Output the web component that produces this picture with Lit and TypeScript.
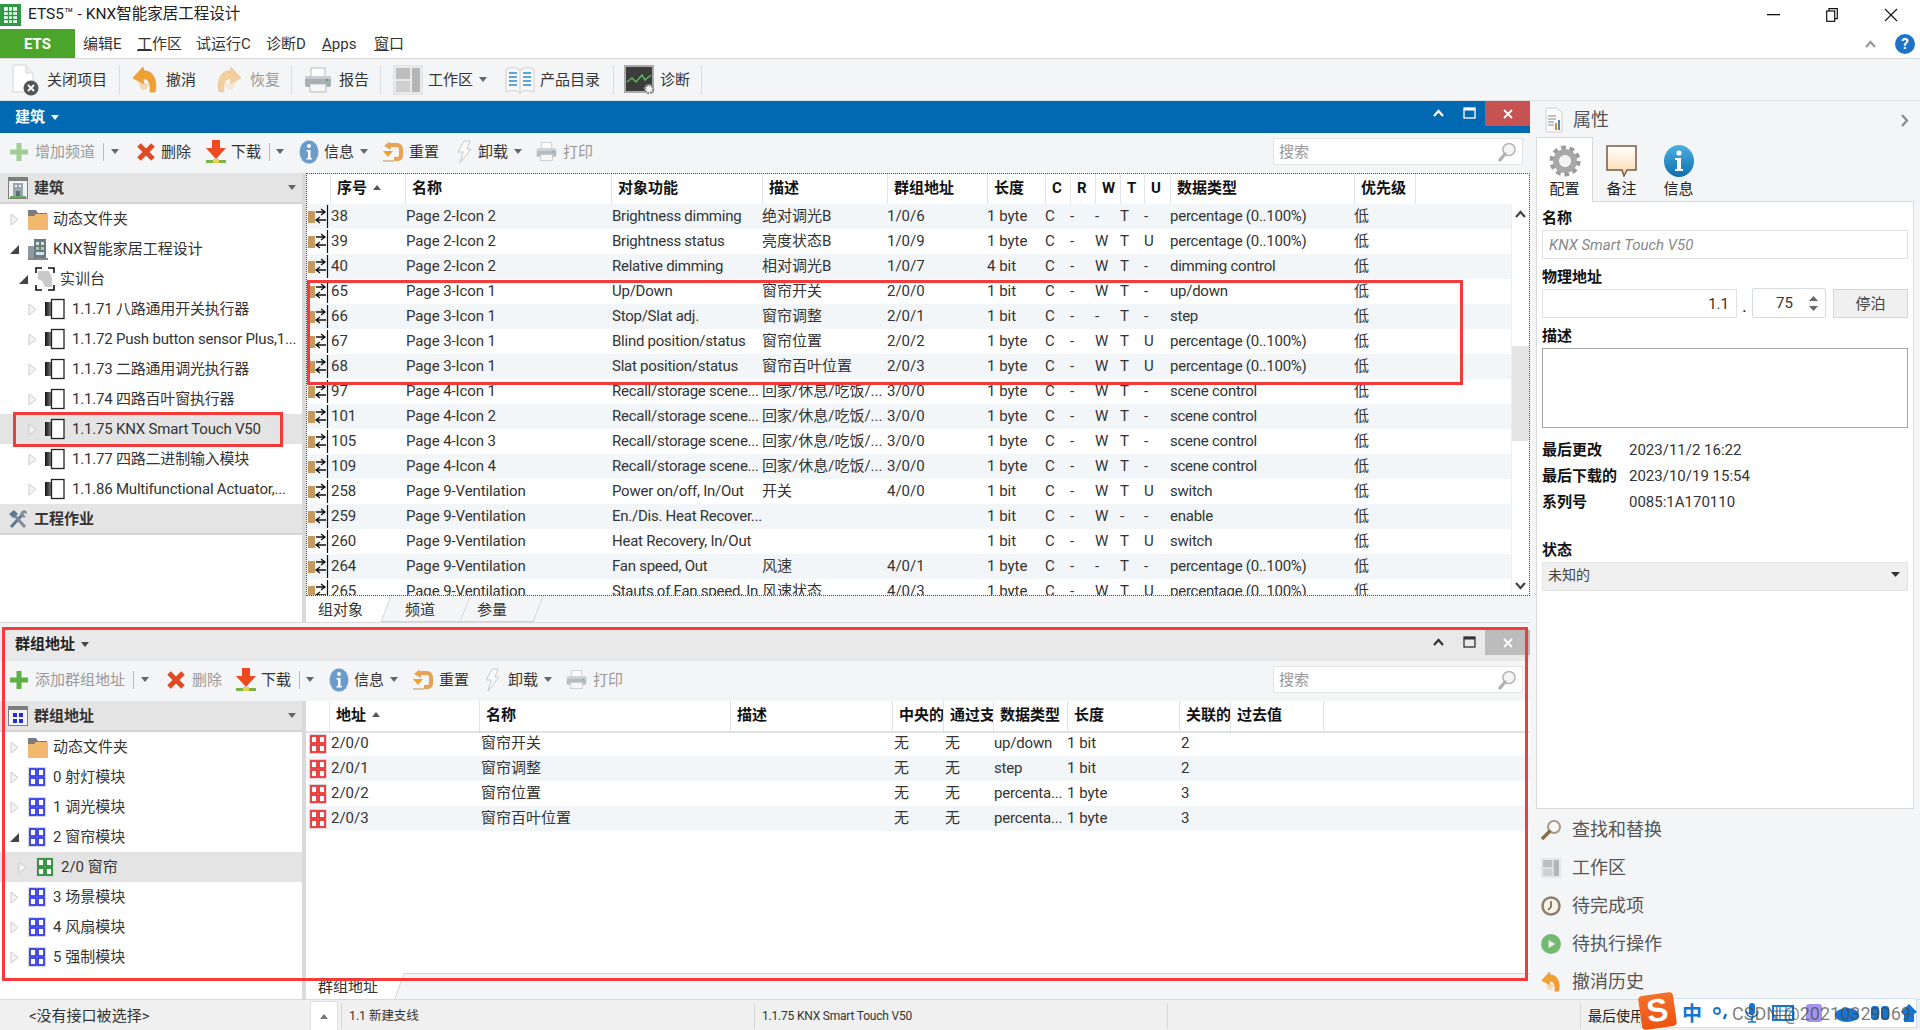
import { LitElement, html, css, svg } from "lit";
import { customElement } from "lit/decorators.js";

const S = (w: number, h: number, body: any, vb?: string) => html`<svg width=${w} height=${h} viewBox=${vb || `0 0 ${w} ${h}`} xmlns="http://www.w3.org/2000/svg">${body}</svg>`;

const logo = () => S(21, 22, svg`<rect width="21" height="22" fill="#2f9a45"/><rect x="4" y="3" width="13" height="16" fill="#fff"/><path d="M8.500 3v16M12.500 3v16M4 7.500h13M4 11.500h13M4 15.500h13" stroke="#2f9a45" stroke-width="1.400"/>`);
const closeDoc = () => S(30, 32, svg`<path d="M3 1h13l7 8v19H3z" fill="#fff" stroke="#d5d5d5"/><path d="M16 1v8h7" fill="#eee" stroke="#d5d5d5"/><circle cx="21" cy="24" r="7.500" fill="#555"/><path d="M18 21l6 6M24 21l-6 6" stroke="#fff" stroke-width="1.800"/>`);
const undoP = svg`<path d="M23 25C26 14 21 3 12 4L11 0 1 11l11 6-1-5c5-1 8 4 7 13z" fill="#f0a030" stroke="#e08a20" stroke-width=".6"/><path d="M6 14l3 9 5 0 3-6-5-1z" fill="#f5c070" opacity=".55"/>`;
const undo = (o = 1, flip = false) => html`<svg width="26" height="26" viewBox="0 0 26 26" style=${`opacity:${o};${flip ? "transform:scaleX(-1)" : ""}`}>${undoP}</svg>`;
const printer = (w = 28, o = 1) => html`<svg width=${w} height=${w} viewBox="0 0 28 28" style=${`opacity:${o}`}><rect x="7" y="2" width="14" height="9" fill="#fff" stroke="#bbb"/><rect x="1" y="10" width="26" height="11" rx="2" fill="#a9aeb3"/><rect x="1" y="10" width="26" height="3" fill="#c8ccd0"/><circle cx="23" cy="14" r="1.200" fill="#4caf50"/><rect x="6" y="18" width="16" height="8" fill="#f6f6f6" stroke="#bbb"/></svg>`;
const wsIcon = (s = 30) => html`<svg width=${s} height=${s} viewBox="0 0 30 30"><rect width="30" height="30" fill="#e9e9e9" stroke="#dcdcdc"/><rect x="3" y="3" width="14" height="11" fill="#bdbdbd"/><rect x="3" y="16" width="14" height="11" fill="#cfcfcf"/><rect x="19" y="3" width="8" height="24" fill="#b5b5b5"/></svg>`;
const book = () => S(30, 30, svg`<path d="M1 4c5-2 10-2 14 1 4-3 9-3 14-1v23c-5-2-10-2-14 1-4-3-9-3-14-1z" fill="#f7f7f7" stroke="#cfcfcf"/><path d="M15 5v23" stroke="#ccc"/><path d="M4 8h8M4 12h8M4 16h8M4 20h8" stroke="#58a8dc" stroke-width="2"/><path d="M18 8h8M18 12h8M18 16h8M18 20h8" stroke="#58a8dc" stroke-width="2"/>`);
const diag = () => S(32, 30, svg`<rect x="1" y="1" width="28" height="26" fill="#3c3c3c" stroke="#aaa" stroke-width="2"/><path d="M3 17l5-4 4 4 6-7 3 5 6-5" fill="none" stroke="#5cb85c" stroke-width="1.500"/><circle cx="25" cy="24" r="4" fill="#fff" stroke="#8a8a8a" stroke-width="2.600" stroke-dasharray="2 1"/>`);
const plus = (o = 1) => html`<svg width="18" height="18" viewBox="0 0 18 18" style=${`opacity:${o}`}><path d="M6.500 0h5v6.500h6.500v5h-6.500v6.500h-5v-6.500h-6.500v-5h6.500z" fill="#5eb044"/></svg>`;
const xIcon = () => S(20, 20, svg`<path d="M3 3l14 14M17 3L3 17" stroke="#e04b25" stroke-width="5"/>`);
const dl = () => S(22, 24, svg`<path d="M7 0h8v8h6L11 19 1 8h6z" fill="#ee4a22"/><rect x="1" y="20" width="20" height="3" fill="#7bb54a"/><rect x="8" y="19" width="6" height="4" fill="#e8d24a"/>`);
const info = () => S(20, 24, svg`<ellipse cx="10" cy="12" rx="9.500" ry="11.500" fill="#6b9ccb"/><circle cx="10" cy="6" r="2" fill="#fff"/><path d="M7.500 10h4v8h1.500v1.500H7.500V18H9v-6.500H7.500z" fill="#fff"/>`);
const reset = () => S(22, 24, svg`<path d="M7 3h8a6 6 0 0 1 6 6v7a5 5 0 0 1-5 5h-4v-4h3a2 2 0 0 0 2-2V9a2 2 0 0 0-2-2H9v3L2 6l6-5z" fill="#e8a258"/><path d="M1 11h10l-5 6z" fill="#f0a030"/><rect x="1" y="20" width="11" height="2" fill="#d9c3a5"/>`);
const bolt = () => S(16, 24, svg`<path d="M8 1h6l-3 8h4L4 23l3-11H2z" fill="#fafafa" stroke="#c8c8c8"/>`);
const search = () => S(20, 20, svg`<circle cx="12" cy="7.500" r="6" fill="#f5f5f5" stroke="#b5b5b5" stroke-width="1.600"/><path d="M8 12l-5 6" stroke="#b0b0b0" stroke-width="3.200" stroke-linecap="round"/>`);
const groupObj = () => S(22, 25, svg`<rect x="1" y="7" width="7" height="12" fill="#c49a5e"/><path d="M9 8h8M14 5l4 3-4 3" fill="none" stroke="#111" stroke-width="1.300"/><path d="M19 16h-9M13 13l-4 3 4 3" fill="none" stroke="#111" stroke-width="1.300"/><path d="M20.500 1v23" stroke="#111" stroke-width="1.200"/>`);
const triOpen = () => S(9, 13, svg`<path d="M1 1l7 5.500L1 12z" fill="#f4f4f4" stroke="#ccc"/>`);
const triDown = () => S(9, 9, svg`<path d="M9 0v9H0z" fill="#444"/>`);
const folder = () => S(20, 23, svg`<path d="M0 2h8l2 3h9v5H0z" fill="#7b7b7b"/><path d="M0 22V8h6l2-2h12v16z" fill="#f2b96e"/>`);
const project = () => S(20, 22, svg`<rect x="0" y="8" width="8" height="13" fill="#8f9aa0"/><rect x="6" y="1" width="12" height="20" fill="#6e7a80"/><rect x="8" y="4" width="3" height="3" fill="#cfe3ea"/><rect x="13" y="4" width="3" height="3" fill="#cfe3ea"/><rect x="8" y="9" width="3" height="3" fill="#9fd09a"/><rect x="13" y="9" width="3" height="3" fill="#9fd09a"/><rect x="8" y="14" width="8" height="3" fill="#cfe3ea"/><rect x="0" y="20" width="20" height="2" fill="#888"/>`);
const room = () => S(20, 24, svg`<path d="M0 0h20v24H0z" fill="#fff"/><path d="M1 6V1h6M13 1h6v5M1 18v5h6M13 23h6v-5" fill="none" stroke="#111" stroke-width="1.600"/><path d="M3 4h11l3 7v9h-7l-3-6-4-2z" fill="#c9c9c9"/>`);
const device = () => S(20, 22, svg`<defs><linearGradient id="dg" x1="0" x2="1"><stop offset="0" stop-color="#111"/><stop offset="1" stop-color="#888"/></linearGradient></defs><rect x="0" y="4" width="7" height="14" fill="url(#dg)"/><rect x="6.500" y="1.500" width="12.500" height="19" fill="#fff" stroke="#222" stroke-width="1.300"/>`);
const gaIcon = (c: string) => S(18, 20, svg`<rect width="18" height="20" fill="#d6d6dc"/><g fill="#fff" stroke=${c} stroke-width="1.700"><rect x="2" y="2" width="6" height="7"/><rect x="10" y="2" width="6" height="7"/><rect x="2" y="11" width="6" height="7"/><rect x="10" y="11" width="6" height="7"/></g>`);
const buildingH = () => S(20, 22, svg`<rect x=".5" y=".5" width="19" height="21" fill="#f2f2f2" stroke="#7d7d7d"/><rect x="1" y="1" width="18" height="3" fill="#7d7d7d"/><rect x="5" y="6" width="10" height="13" fill="#9aa6ad"/><rect x="7" y="8" width="2" height="2" fill="#e8f0f5"/><rect x="11" y="8" width="2" height="2" fill="#e8f0f5"/><rect x="8" y="14" width="4" height="5" fill="#5f6d75"/><rect x="2" y="19" width="16" height="2" fill="#5fae5a"/>`);
const tools = () => S(20, 20, svg`<path d="M3 18L15 5" stroke="#5d7a94" stroke-width="3"/><path d="M17 18L6 6" stroke="#7f8c95" stroke-width="3"/><path d="M1 5l5-4 4 4-5 4z" fill="#5d7a94"/><path d="M14 2c3-2 5 0 5 3l-3-1-1 2 3 1c-2 3-6 1-6-2z" fill="#7f8c95"/>`);
const gaH = () => S(20, 20, svg`<rect x=".5" y=".5" width="19" height="19" fill="#f4f4f8" stroke="#7d7d7d"/><rect x="1" y="1" width="18" height="3" fill="#7d7d7d"/><g fill="#1c2fd6"><rect x="5" y="7" width="4" height="4"/><rect x="11" y="7" width="4" height="4"/><rect x="5" y="13" width="4" height="4"/><rect x="11" y="13" width="4" height="4"/></g>`);
const propDoc = () => S(18, 26, svg`<path d="M1 1h11l5 5v19H1z" fill="#fafafa" stroke="#d0d0d0"/><path d="M3 9h8M3 12h8M3 15h6M3 18h6" stroke="#888" stroke-width="1.200"/><rect x="10" y="16" width="2" height="7" fill="#e08a20"/><rect x="13" y="13" width="2" height="10" fill="#3f86c8"/>`);
const gear = () => S(32, 32, svg`<circle cx="16" cy="16" r="13" fill="none" stroke="#9a9a9a" stroke-width="5" stroke-dasharray="4.500 3.670"/><circle cx="16" cy="16" r="9" fill="none" stroke="#a8a8a8" stroke-width="6"/><circle cx="16" cy="16" r="5" fill="#f2f2f2"/>`);
const note = () => S(32, 32, svg`<defs><linearGradient id="ng" x1="0" x2="0" y1="0" y2="1"><stop offset="0" stop-color="#fff"/><stop offset="1" stop-color="#fcd9aa"/></linearGradient></defs><path d="M1 1h29v24h-9l-3 6-2-6H1z" fill="url(#ng)" stroke="#7a5a44" stroke-width="1.500"/>`);
const bigInfo = () => S(30, 32, svg`<defs><linearGradient id="ig" x1="0" x2="0" y1="0" y2="1"><stop offset="0" stop-color="#4db0e0"/><stop offset="1" stop-color="#0d6fb0"/></linearGradient></defs><ellipse cx="15" cy="16" rx="15" ry="16" fill="url(#ig)"/><circle cx="15" cy="8" r="2.600" fill="#fff"/><path d="M11 13h6v11h2v2h-8v-2h2v-9h-2z" fill="#fff"/>`);
const mag = () => S(20, 20, svg`<circle cx="13" cy="7" r="6" fill="#f8f8f8" stroke="#a89a8a" stroke-width="2"/><path d="M8.500 11.500L2 18" stroke="#8a6a4a" stroke-width="3.500" stroke-linecap="round"/>`);
const clock = () => S(20, 20, svg`<circle cx="10" cy="10" r="8.500" fill="#faf3e6" stroke="#8d7f70" stroke-width="2.500"/><path d="M10 5v6l-3 3" fill="none" stroke="#6a5a4a" stroke-width="1.500"/>`);
const play = () => S(20, 20, svg`<circle cx="10" cy="10" r="10" fill="#73b973"/><path d="M7.500 6l7 4-7 4z" fill="#e4f3e4"/>`);
const triCaret = (c = "#666") => S(8, 5, svg`<path d="M0 0h8L4 5z" fill=${c}/>`);
const chev = (c = "#fff") => S(11, 8, svg`<path d="M1 7l4.500-5L10 7" fill="none" stroke=${c} stroke-width="2.200"/>`);
const maxBtn = (c = "#fff") => S(13, 12, svg`<rect x="1" y="1" width="11" height="10" fill="none" stroke=${c} stroke-width="1.300"/><rect x="1" y="1" width="11" height="2.500" fill=${c}/>`);
const xBtn = (c = "#fff") => S(10, 10, svg`<path d="M1 1l8 8M9 1l-8 8" stroke=${c} stroke-width="1.800"/>`);

const topRows: string[][] = [
  ["38","Page 2-Icon 2","Brightness dimming","绝对调光B","1/0/6","1 byte","C","-","-","T","-","percentage (0..100%)"],
  ["39","Page 2-Icon 2","Brightness status","亮度状态B","1/0/9","1 byte","C","-","W","T","U","percentage (0..100%)"],
  ["40","Page 2-Icon 2","Relative dimming","相对调光B","1/0/7","4 bit","C","-","W","T","-","dimming control"],
  ["65","Page 3-Icon 1","Up/Down","窗帘开关","2/0/0","1 bit","C","-","W","T","-","up/down"],
  ["66","Page 3-Icon 1","Stop/Slat adj.","窗帘调整","2/0/1","1 bit","C","-","-","T","-","step"],
  ["67","Page 3-Icon 1","Blind position/status","窗帘位置","2/0/2","1 byte","C","-","W","T","U","percentage (0..100%)"],
  ["68","Page 3-Icon 1","Slat position/status","窗帘百叶位置","2/0/3","1 byte","C","-","W","T","U","percentage (0..100%)"],
  ["97","Page 4-Icon 1","Recall/storage scene...","回家/休息/吃饭/...","3/0/0","1 byte","C","-","W","T","-","scene control"],
  ["101","Page 4-Icon 2","Recall/storage scene...","回家/休息/吃饭/...","3/0/0","1 byte","C","-","W","T","-","scene control"],
  ["105","Page 4-Icon 3","Recall/storage scene...","回家/休息/吃饭/...","3/0/0","1 byte","C","-","W","T","-","scene control"],
  ["109","Page 4-Icon 4","Recall/storage scene...","回家/休息/吃饭/...","3/0/0","1 byte","C","-","W","T","-","scene control"],
  ["258","Page 9-Ventilation","Power on/off, In/Out","开关","4/0/0","1 bit","C","-","W","T","U","switch"],
  ["259","Page 9-Ventilation","En./Dis. Heat Recover...","","","1 bit","C","-","W","-","-","enable"],
  ["260","Page 9-Ventilation","Heat Recovery, In/Out","","","1 bit","C","-","W","T","U","switch"],
  ["264","Page 9-Ventilation","Fan speed, Out","风速","4/0/1","1 byte","C","-","-","T","-","percentage (0..100%)"],
  ["265","Page 9-Ventilation","Stauts of Fan speed, In","风速状态","4/0/3","1 byte","C","-","W","T","U","percentage (0..100%)"],
];
const topHead = ["序号","名称","对象功能","描述","群组地址","长度","C","R","W","T","U","数据类型","优先级",""];
const gaRows = [
  ["2/0/0","窗帘开关","","无","无","up/down","1 bit","2"],
  ["2/0/1","窗帘调整","","无","无","step","1 bit","2"],
  ["2/0/2","窗帘位置","","无","无","percenta...","1 byte","3"],
  ["2/0/3","窗帘百叶位置","","无","无","percenta...","1 byte","3"],
];
const gaHead = ["地址","名称","描述","中央的","通过支","数据类型","长度","关联的","过去值",""];

type It = { i?: any; t?: string; o?: number; w: number; sep?: boolean; c?: boolean; caret?: boolean; dim?: boolean };
const main: It[] = [
  { i: closeDoc(), t: "关闭项目", o: 37, w: 109 }, { sep: true, w: 13 },
  { i: undo(), t: "撤消", o: 34, w: 84 }, { i: undo(.45, true), t: "恢复", o: 34, w: 75, dim: true }, { sep: true, w: 13 },
  { i: printer(), t: "报告", o: 35, w: 76 }, { sep: true, w: 13 },
  { i: wsIcon(), t: "工作区", o: 35, w: 112, caret: true }, { i: book(), t: "产品目录", o: 35, w: 108 }, { sep: true, w: 11 },
  { i: diag(), t: "诊断", o: 36, w: 77 }, { sep: true, w: 2 },
];
const sub1: It[] = [
  { i: plus(.55), t: "增加频道", o: 25, w: 93, dim: true }, { sep: true, w: 8 }, { c: true, w: 25 },
  { i: xIcon(), t: "删除", o: 25, w: 69 }, { i: dl(), t: "下载", o: 26, w: 64 }, { sep: true, w: 7 }, { c: true, w: 23 },
  { i: info(), t: "信息", o: 25, w: 83, caret: true }, { i: reset(), t: "重置", o: 27, w: 74 },
  { i: bolt(), t: "卸载", o: 22, w: 80, caret: true }, { i: printer(21, .8), t: "打印", o: 27, w: 70, dim: true },
];
const sub2: It[] = [
  { i: plus(), t: "添加群组地址", o: 25, w: 123, dim: true }, { sep: true, w: 8 }, { c: true, w: 25 },
  { i: xIcon(), t: "删除", o: 26, w: 69, dim: true }, { i: dl(), t: "下载", o: 26, w: 64 }, { sep: true, w: 7 }, { c: true, w: 23 },
  { i: info(), t: "信息", o: 25, w: 83, caret: true }, { i: reset(), t: "重置", o: 27, w: 72 },
  { i: bolt(), t: "卸载", o: 24, w: 82, caret: true }, { i: printer(21, .8), t: "打印", o: 27, w: 70, dim: true },
];
const menus: [any, number][] = [
  ["编辑E", 54], [html`<u>工</u>作区`, 59], ["试运行C", 70], ["诊断D", 56], [html`<u>A</u>pps`, 52], [html`<u>窗</u>口`, 40],
];

@customElement("app-root")
export class AppRoot extends LitElement {
  static styles = css`
    :host { display: block; position: relative; width: 1920px; height: 1030px; overflow: hidden; background: #f4f5f7;
      font-family: Roboto, "Noto Sans CJK SC", sans-serif; font-size: 15px; line-height: 20px; color: #222; }
    svg { display: block; flex: none; }
    .title { height: 29px; background: #fff; display: flex; align-items: center; }
    .title .tx { margin-left: 7px; font-size: 15.500px; color: #222; flex: 1; padding-bottom: 1px; }
    .winbtns { display: flex; align-items: center; }
    .wb { width: 58.500px; display: flex; justify-content: center; }
    .menu { height: 29px; background: #fff; display: flex; align-items: center; }
    .ets { width: 75px; height: 29px; background: #4ca52b; color: #fff; font-weight: 700; display: flex; align-items: center; justify-content: center; margin-right: 8px; font-size: 15px; }
    .mi { color: #333; flex: none; }
    .menu .sp { flex: 1; }
    .help { width: 20px; height: 20px; border-radius: 50%; background: #1b74c8; color: #fff; font-weight: 700; font-size: 15px; display: flex; align-items: center; justify-content: center; margin: 0 5px 0 19px; }
    .tb { height: 41px; border-top: 1px solid #d9d9d9; border-bottom: 1px solid #dcdfe3; background: #f4f5f7; display: flex; align-items: center; padding-left: 10px; box-sizing: content-box; }
    .sub { height: 40px; background: #f4f5f7; display: flex; align-items: center; padding-left: 10px; padding-bottom: 3px; box-sizing: border-box; flex: none; }
    .it { display: flex; align-items: center; flex: none; color: #333; white-space: nowrap; }
    .it.dim { color: #999; }
    .ib { flex: none; display: flex; align-items: center; }
    .it .cr { margin-left: 6px; }
    .sepl { width: 1px; height: 30px; background: #d9dce0; }
    .sub .sepl { height: 18px; background: #bbb; }
    .workarea { display: flex; height: 898px; }
    .left { width: 1530px; flex: none; display: flex; flex-direction: column; }
    .phead { height: 32px; background: #0069b1; color: #fff; display: flex; align-items: center; position: relative; flex: none; font-weight: 700; }
    .phead.gray { height: 31px; background: #e9e9e9; color: #222; }
    .phead.gray .ptitle { padding-bottom: 3px; }
    .ptitle { margin-left: 15px; display: flex; align-items: center; gap: 6px; flex: 1; }
    .pb { width: 31px; display: flex; justify-content: center; margin-top: -8px; }
    .pclose { width: 45px; height: 25px; background: #c75252; display: flex; align-items: center; justify-content: center; align-self: flex-start; }
    .phead.gray .pclose { background: #bcbcbc; }
    .sbox { margin-left: auto; margin-right: 7px; width: 250px; height: 27px; background: #fff; border: 1px solid #e3e3e3; display: flex; align-items: center; justify-content: space-between; color: #999; padding: 0 5px; box-sizing: border-box; flex: none; }
    .p1 { height: 522px; display: flex; flex-direction: column; border-bottom: 1px solid #d9d9d9; box-sizing: border-box; }
    .body { flex: 1; display: flex; min-height: 0; }
    .tree { width: 302px; flex: none; background: #fff; }
    .split { width: 4px; flex: none; background: #d9d9d9; }
    .thead { height: 31px; background: #e4e4e4; border-bottom: 2px solid #d4d4d4; box-sizing: border-box; display: flex; align-items: center; padding-left: 8px; color: #333; font-weight: 700; gap: 6px; }
    .thead .ca { margin-left: auto; margin-right: 6px; }
    .tr { height: 30px; display: flex; align-items: center; color: #333; white-space: nowrap; overflow: hidden; }
    .tr.sel { background: #e4e4e4; }
    .t { flex: none; display: flex; align-items: center; box-sizing: border-box; }
    .l0 .t { width: 28px; padding-left: 10px; }
    .l0 .n { width: 25px; }
    .l1 .t { width: 35px; padding-left: 19px; }
    .l1 .n { width: 25px; }
    .l2 { letter-spacing: -.2px; }
    .l2 .t { width: 45px; padding-left: 28px; }
    .l2 .n { width: 27px; }
    .g1 .t { width: 36px; padding-left: 18px; }
    .g1 .n { width: 25px; }
    .n { flex: none; }
    .right-pane { flex: 1; min-width: 0; display: flex; flex-direction: column; }
    .grid { flex: 1; min-height: 0; background: #fff; border: 1px dotted #444; overflow: hidden; display: flex; flex-direction: column; box-sizing: border-box; }
    .hrow { height: 30px; display: grid; background: #fff; border-bottom: 2px solid #e0e3e6; box-sizing: content-box; flex: none; font-weight: 700; color: #111; }
    .hc { border-left: 1px solid #e2e4e6; padding-left: 6px; line-height: 28px; white-space: nowrap; overflow: hidden; box-sizing: border-box; }
    .hc.first { border-left: 0; }
    .hc .sort { display: inline-block; vertical-align: 3px; margin-left: 6px; }
    .c1 { grid-template-columns: 23px 75px 206px 151px 125px 100px 58px 25px 25px 25px 24px 26px 184px 61px 96px 18px; }
    .c1b { grid-template-columns: 23px 75px 206px 151px 125px 100px 58px 25px 25px 25px 24px 26px 184px 61px 96px; }
    .c2 { grid-template-columns: 23px 150px 251px 162px 51px 50px 74px 112px 51px 93px 1fr; }
    .bodyrows { flex: 1; display: flex; min-height: 0; margin-top: -2px; }
    .rows { flex: 1; min-width: 0; }
    .row { height: 25px; display: grid; line-height: 25px; color: #333; white-space: nowrap; }
    .row.alt { background: #f2f6f9; }
    .row > div { overflow: hidden; white-space: nowrap; }
    .row .ic { display: flex; align-items: center; }
    .c1b > :nth-child(2), .c1b > :nth-child(3), .c1b > :nth-child(4) { padding-left: 1px; }
    .c1b > :nth-child(3) { letter-spacing: -.1px; }
    .c1b > :nth-child(4), .c1b > :nth-child(13) { letter-spacing: -.25px; }
    .c2.row .ic { padding-left: 3px; }
    .c2.row > :nth-child(2), .c2.row > :nth-child(3), .c2.row > :nth-child(5), .c2.row > :nth-child(6), .c2.row > :nth-child(9) { padding-left: 2px; }
    .c2.row > :nth-child(7) { padding-left: 1px; letter-spacing: -.2px; }
    .sb { width: 18px; flex: none; display: flex; flex-direction: column; align-items: center; background: #fff; border-left: 1px solid #eee; box-sizing: border-box; }
    .sb .th { width: 100%; background: #e4e4e4; height: 95px; margin-top: 128px; }
    .sb .ar { margin-top: 6px; }
    .sb .ar.dn { margin-top: auto; margin-bottom: 5px; transform: scaleY(-1); }
    .tabs { height: 26px; flex: none; display: flex; position: relative; background: #f4f5f7; }
    .tab { display: flex; align-items: center; color: #333; padding-left: 12px; padding-top: 1px; box-sizing: border-box; position: relative; z-index: 1; }
    .tabline { position: absolute; left: 0; top: 0; }
    .gap { height: 7px; flex: none; }
    .p2 { flex: 1; min-height: 0; display: flex; flex-direction: column; }
    .grid2 { flex: 1; min-height: 0; background: #fff; overflow: hidden; display: flex; flex-direction: column; }
    .rows2 { margin-top: -2px; }
    .right { flex: 1; min-width: 0; display: flex; flex-direction: column; padding-left: 6px; box-sizing: border-box; }
    .rh { height: 36px; flex: none; display: flex; align-items: center; padding-left: 9px; padding-top: 2px; box-sizing: border-box; font-size: 18px; color: #555; gap: 10px; }
    .rh .ch { margin-left: auto; margin-right: 11px; }
    .rtabs { display: flex; height: 65px; flex: none; margin-bottom: -1px; position: relative; z-index: 1; }
    .rt { width: 57px; height: 65px; box-sizing: border-box; display: flex; flex-direction: column; align-items: center; padding-top: 7px; gap: 2px; color: #222; border: 1px solid transparent; border-bottom: 0; }
    .rt.on { background: #fff; border-color: #d9d9d9; }
    .rbody { width: 378px; height: 608px; flex: none; box-sizing: border-box; background: #fff; border: 1px solid #d9d9d9; padding: 0 5px; display: flex; flex-direction: column; }
    .lab { height: 30px; padding-top: 6px; line-height: 24px; box-sizing: border-box; font-weight: 700; color: #111; flex: none; }
    .lab.first { margin-top: -2px; }
    .inp { height: 29px; border: 1px solid #e1e1e1; box-sizing: border-box; display: flex; align-items: center; flex: none; }
    .name { font-style: italic; color: #888; padding-left: 6px; }
    .ph { display: flex; height: 29px; flex: none; align-items: stretch; }
    .a1 { width: 195px; justify-content: flex-end; padding-right: 7px; color: #333; }
    .dot { width: 15px; text-align: center; line-height: 38px; font-weight: 700; font-size: 13px; }
    .a2 { width: 74px; height: 30px; margin-top: -1px; padding-left: 23px; justify-content: flex-start; border-color: #d5dbe0; border-radius: 2px; position: relative; color: #333; }
    .spin { margin-left: auto; margin-right: 7px; display: flex; flex-direction: column; gap: 5px; }
    .stop { width: 75px; margin-left: 7px; background: #f0f0f0; border: 1px solid #d5d5d5; box-sizing: border-box; display: flex; align-items: center; justify-content: center; color: #444; }
    .ta { height: 80px; flex: none; border: 1px solid #a6a6a6; box-sizing: border-box; }
    .kv { height: 26px; display: flex; align-items: center; flex: none; }
    .kv b { width: 87px; color: #111; font-weight: 700; white-space: nowrap; flex: none; }
    .kv span { color: #333; }
    .kvs { margin-top: 9px; }
    .sel2 { height: 29px; background: #f0f0f0; border: 1px solid #e4e4e4; box-sizing: border-box; display: flex; align-items: center; padding: 0 7px 4px 5px; justify-content: space-between; color: #444; flex: none; font-size: 14px; }
    .lab.st { margin-top: 17px; }
    .nav { margin-top: 2px; }
    .nv { height: 38px; display: flex; align-items: center; padding-left: 5px; gap: 11px; font-size: 18px; color: #555; }
    .nv svg { width: 20px; height: 20px; }
    .status { height: 32px; flex: none; background: #f0f0f0; border-top: 1px solid #d9d9d9; box-sizing: border-box; display: flex; align-items: center; position: relative; font-size: 12px; color: #333; }
    .nosel { width: 310px; padding-left: 29px; box-sizing: border-box; font-size: 15px; flex: none; }
    .upbox { width: 28px; height: 30px; background: #fff; border: 1px solid #e0e0e0; box-sizing: border-box; display: flex; align-items: center; justify-content: center; flex: none; margin-top: 1px; }
    .gap3 { width: 3px; flex: none; }
    .ssep { width: 1px; height: 26px; background: #d8d8d8; flex: none; }
    .st1 { width: 412px; padding-left: 7px; box-sizing: border-box; flex: none; font-size: 12.500px; letter-spacing: -.1px; }
    .st2 { width: 412px; padding-left: 7px; box-sizing: border-box; flex: none; letter-spacing: -.2px; }
    .st3 { width: 412px; flex: none; }
    .last { padding-left: 7px; font-size: 14px; color: #222; white-space: nowrap; }
    .ime { position: absolute; left: 1640px; top: 998px; width: 277px; height: 30px; background: #fff; border: 1px solid #cfe0f2; box-sizing: border-box; }
    .slogo { position: absolute; left: 1640px; top: 994px; width: 35px; height: 34px; background: linear-gradient(#f4702a, #ee5310); border-radius: 4px; transform: rotate(-8deg); color: #fff; font-weight: 900; font-size: 32px; line-height: 33px; text-align: center; font-family: "Liberation Sans", sans-serif; }
    .zh { position: absolute; left: 1682px; top: 1001px; color: #1476d2; font-size: 20px; font-weight: 700; line-height: 26px; }
    .wm { position: absolute; left: 1732px; top: 1003px; font-size: 18px; line-height: 22px; color: rgba(70,70,70,.7); white-space: nowrap; }
    .imeicons { position: absolute; left: 1712px; top: 1002px; display: flex; align-items: center; gap: 10px; }
    .red { position: absolute; border: 3px solid #f53a3a; box-sizing: border-box; pointer-events: none; z-index: 5; }
    .r1 { left: 13px; top: 412px; width: 270px; height: 35px; }
    .r2 { left: 307px; top: 280px; width: 1156px; height: 105px; }
    .r3 { left: 2px; top: 627px; width: 1526px; height: 354px; }
  `;

  items(list: It[]) {
    return list.map((x) => {
      if (x.sep) return html`<div class="it" style=${`width:${x.w}px`}><div class="sepl"></div></div>`;
      if (x.c) return html`<div class="it" style=${`width:${x.w}px`}>${triCaret()}</div>`;
      return html`<div class="it ${x.dim ? "dim" : ""}" style=${`width:${x.w}px`}><div class="ib" style=${`width:${x.o}px`}>${x.i}</div>${x.t}${x.caret ? html`<span class="cr">${triCaret()}</span>` : ""}</div>`;
    });
  }

  tree1(cls: string, tri: any, ic: any, text: string, sel = false) {
    return html`<div class="tr ${cls} ${sel ? "sel" : ""}"><div class="t">${tri}</div><div class="n">${ic}</div>${text}</div>`;
  }

  render() {
    const A = triOpen(), D = triDown();
    return html`
      <div class="title">${logo()}<div class="tx">ETS5™ - KNX智能家居工程设计</div>
        <div class="winbtns">
          <div class="wb">${S(13, 2, svg`<rect width="13" height="1.300" fill="#111"/>`)}</div>
          <div class="wb">${S(12, 14, svg`<rect x=".7" y="3" width="8" height="10.300" fill="#fff" stroke="#111" stroke-width="1.200"/><path d="M3 3V.7h8.300v10H9" fill="none" stroke="#111" stroke-width="1.200"/>`)}</div>
          <div class="wb">${S(14, 14, svg`<path d="M1 1l12 12M13 1L1 13" stroke="#111" stroke-width="1.100"/>`)}</div>
        </div></div>
      <div class="menu"><div class="ets">ETS</div>
        ${menus.map(([t, w]) => html`<div class="mi" style=${`width:${w}px`}>${t}</div>`)}
        <div class="sp"></div>${chev("#999")}<div class="help">?</div></div>
      <div class="tb">${this.items(main)}</div>
      <div class="workarea">
        <div class="left">
          <div class="p1">
            <div class="phead"><div class="ptitle">建筑 ${triCaret("#fff")}</div><div class="pb">${chev()}</div><div class="pb">${maxBtn()}</div><div class="pclose">${xBtn()}</div></div>
            <div class="sub">${this.items(sub1)}<div class="sbox">搜索${search()}</div></div>
            <div class="body">
              <div class="tree">
                <div class="thead">${buildingH()}建筑<span class="ca">${triCaret()}</span></div>
                ${this.tree1("l0", A, folder(), "动态文件夹")}
                ${this.tree1("l0", D, project(), "KNX智能家居工程设计")}
                ${this.tree1("l1", D, room(), "实训台")}
                ${this.tree1("l2", A, device(), "1.1.71 八路通用开关执行器")}
                ${this.tree1("l2", A, device(), "1.1.72 Push button sensor Plus,1...")}
                ${this.tree1("l2", A, device(), "1.1.73 二路通用调光执行器")}
                ${this.tree1("l2", A, device(), "1.1.74 四路百叶窗执行器")}
                ${this.tree1("l2", A, device(), "1.1.75 KNX Smart Touch V50", true)}
                ${this.tree1("l2", A, device(), "1.1.77 四路二进制输入模块")}
                ${this.tree1("l2", A, device(), "1.1.86 Multifunctional Actuator,...")}
                <div class="thead">${tools()}工程作业</div>
              </div>
              <div class="split"></div>
              <div class="right-pane">
                <div class="grid">
                  <div class="hrow c1">
                    <div class="hc first"></div>
                    ${topHead.map((h, i) => html`<div class="hc">${h}${i === 0 ? html`<span class="sort">${S(8, 5, svg`<path d="M4 0l4 5H0z" fill="#555"/>`)}</span>` : ""}</div>`)}
                  </div>
                  <div class="bodyrows">
                    <div class="rows">
                      ${topRows.map((r, i) => html`<div class="row c1b ${i % 2 === 0 ? "alt" : ""}">
                        <div class="ic">${groupObj()}</div>
                        ${r.map((v) => html`<div>${v}</div>`)}<div>低</div><div></div></div>`)}
                    </div>
                    <div class="sb"><div class="ar">${chev("#444")}</div><div class="th"></div><div class="ar dn">${chev("#444")}</div></div>
                  </div>
                </div>
                <div class="tabs">
                  <svg class="tabline" width="240" height="26" viewBox="0 0 240 26"><path d="M0 26V0H85L75 26z" fill="#fff"/><path d="M75 26L85 0M154 26L164 0M227 26L237 0" fill="none" stroke="#d5d5d5"/><path d="M75 25.500H227" stroke="#d5d5d5"/></svg>
                  <div class="tab" style="width:87px">组对象</div>
                  <div class="tab" style="width:72px">频道</div>
                  <div class="tab" style="width:70px">参量</div>
                </div>
              </div>
            </div>
          </div>
          <div class="gap"></div>
          <div class="p2">
            <div class="phead gray"><div class="ptitle">群组地址 ${triCaret("#444")}</div><div class="pb">${chev("#333")}</div><div class="pb">${maxBtn("#333")}</div><div class="pclose">${xBtn()}</div></div>
            <div class="sub">${this.items(sub2)}<div class="sbox">搜索${search()}</div></div>
            <div class="body">
              <div class="tree">
                <div class="thead">${gaH()}群组地址<span class="ca">${triCaret()}</span></div>
                ${this.tree1("l0", A, folder(), "动态文件夹")}
                ${this.tree1("l0", A, gaIcon("#2a35e8"), "0 射灯模块")}
                ${this.tree1("l0", A, gaIcon("#2a35e8"), "1 调光模块")}
                ${this.tree1("l0", D, gaIcon("#2a35e8"), "2 窗帘模块")}
                ${this.tree1("g1", A, gaIcon("#1f8a2a"), "2/0 窗帘", true)}
                ${this.tree1("l0", A, gaIcon("#2a35e8"), "3 场景模块")}
                ${this.tree1("l0", A, gaIcon("#2a35e8"), "4 风扇模块")}
                ${this.tree1("l0", A, gaIcon("#2a35e8"), "5 强制模块")}
              </div>
              <div class="split"></div>
              <div class="right-pane">
                <div class="grid2">
                  <div class="hrow c2">
                    <div class="hc first"></div>
                    ${gaHead.map((h, i) => html`<div class="hc">${h}${i === 0 ? html`<span class="sort">${S(8, 5, svg`<path d="M4 0l4 5H0z" fill="#555"/>`)}</span>` : ""}</div>`)}
                  </div>
                  <div class="rows2">
                    ${gaRows.map((r, i) => html`<div class="row c2 ${i % 2 === 1 ? "alt" : ""}">
                      <div class="ic">${gaIcon("#ee2a2a")}</div>
                      ${r.map((v) => html`<div>${v}</div>`)}<div></div><div></div></div>`)}
                  </div>
                </div>
                <div class="tabs">
                  <svg class="tabline" width="1224" height="26" viewBox="0 0 1224 26"><path d="M0 26V0H98L89 26z" fill="#fff"/><path d="M89 26L98 .5H1224" fill="none" stroke="#d5d5d5"/></svg>
                  <div class="tab" style="width:87px">群组地址</div>
                </div>
              </div>
            </div>
          </div>
        </div>
        <div class="right">
          <div class="rh">${propDoc()}属性<span class="ch">${S(9, 13, svg`<path d="M2 1l5 5.500L2 12" fill="none" stroke="#888" stroke-width="2.200"/>`)}</span></div>
          <div class="rtabs">
            <div class="rt on">${gear()}配置</div>
            <div class="rt">${note()}备注</div>
            <div class="rt">${bigInfo()}信息</div>
          </div>
          <div class="rbody">
            <div class="lab first">名称</div>
            <div class="inp name">KNX Smart Touch V50</div>
            <div class="lab">物理地址</div>
            <div class="ph">
              <div class="inp a1">1.1</div><div class="dot">.</div>
              <div class="inp a2">75<div class="spin">${S(9, 5, svg`<path d="M4.500 0L9 5H0z" fill="#666"/>`)}${S(9, 5, svg`<path d="M0 0h9L4.500 5z" fill="#666"/>`)}</div></div>
              <div class="stop">停泊</div>
            </div>
            <div class="lab">描述</div>
            <div class="ta"></div>
            <div class="kvs">
              <div class="kv"><b>最后更改</b><span>2023/11/2 16:22</span></div>
              <div class="kv"><b>最后下载的</b><span>2023/10/19 15:54</span></div>
              <div class="kv"><b>系列号</b><span>0085:1A170110</span></div>
            </div>
            <div class="lab st">状态</div>
            <div class="sel2">未知的${S(9, 5, svg`<path d="M0 0h9L4.500 5z" fill="#333"/>`)}</div>
          </div>
          <div class="nav">
            <div class="nv">${mag()}查找和替换</div>
            <div class="nv">${wsIcon(20)}工作区</div>
            <div class="nv">${clock()}待完成项</div>
            <div class="nv">${play()}待执行操作</div>
            <div class="nv">${undo()}撤消历史</div>
          </div>
        </div>
      </div>
      <div class="status">
        <div class="nosel">&lt;没有接口被选择&gt;</div>
        <div class="upbox">${S(8, 5, svg`<path d="M4 0l4 5H0z" fill="#777"/>`)}</div>
        <div class="gap3"></div>
        <div class="ssep"></div><div class="st1">1.1 新建支线</div>
        <div class="ssep"></div><div class="st2">1.1.75 KNX Smart Touch V50</div>
        <div class="ssep"></div><div class="st3"></div>
        <div class="ssep"></div><div class="last">最后使用</div>
      </div>
      <div class="ime"></div>
      <div class="slogo">S</div>
      <div class="zh">中</div>
      <div class="imeicons">
        ${S(20, 20, svg`<circle cx="5" cy="8" r="3" fill="none" stroke="#1476d2" stroke-width="1.800"/><path d="M14 11l-2 5" stroke="#1476d2" stroke-width="2.500"/>`)}
        ${S(20, 22, svg`<rect x="7" y="1" width="6" height="12" rx="3" fill="#1476d2"/><path d="M4 9a6 6 0 0 0 12 0M10 15v5M6 20h8" fill="none" stroke="#1476d2" stroke-width="1.500"/>`)}
        ${S(22, 20, svg`<rect x="1" y="3" width="20" height="14" fill="none" stroke="#1476d2" stroke-width="2"/><path d="M1 8h20M1 12.500h20M8 3v14M14 3v14" stroke="#1476d2" stroke-width="1.200"/>`)}
        ${S(20, 22, svg`<rect x="2" y="2" width="16" height="18" rx="3" fill="#8d78e8" opacity=".8"/>`)}
        ${S(26, 20, svg`<ellipse cx="13" cy="12" rx="12" ry="7" fill="#1476d2"/>`)}
        ${S(20, 20, svg`<rect x="1" y="3" width="8" height="14" rx="3" fill="#1476d2"/><rect x="11" y="3" width="8" height="14" rx="3" fill="#1476d2"/>`)}
        ${S(18, 20, svg`<path d="M9 1l8 8-3 2v8H4v-8L1 9z" fill="#1476d2"/>`)}
      </div>
      <div class="wm">CSDN @20210329069</div>
      <div class="red r1"></div><div class="red r2"></div><div class="red r3"></div>
    `;
  }
}
